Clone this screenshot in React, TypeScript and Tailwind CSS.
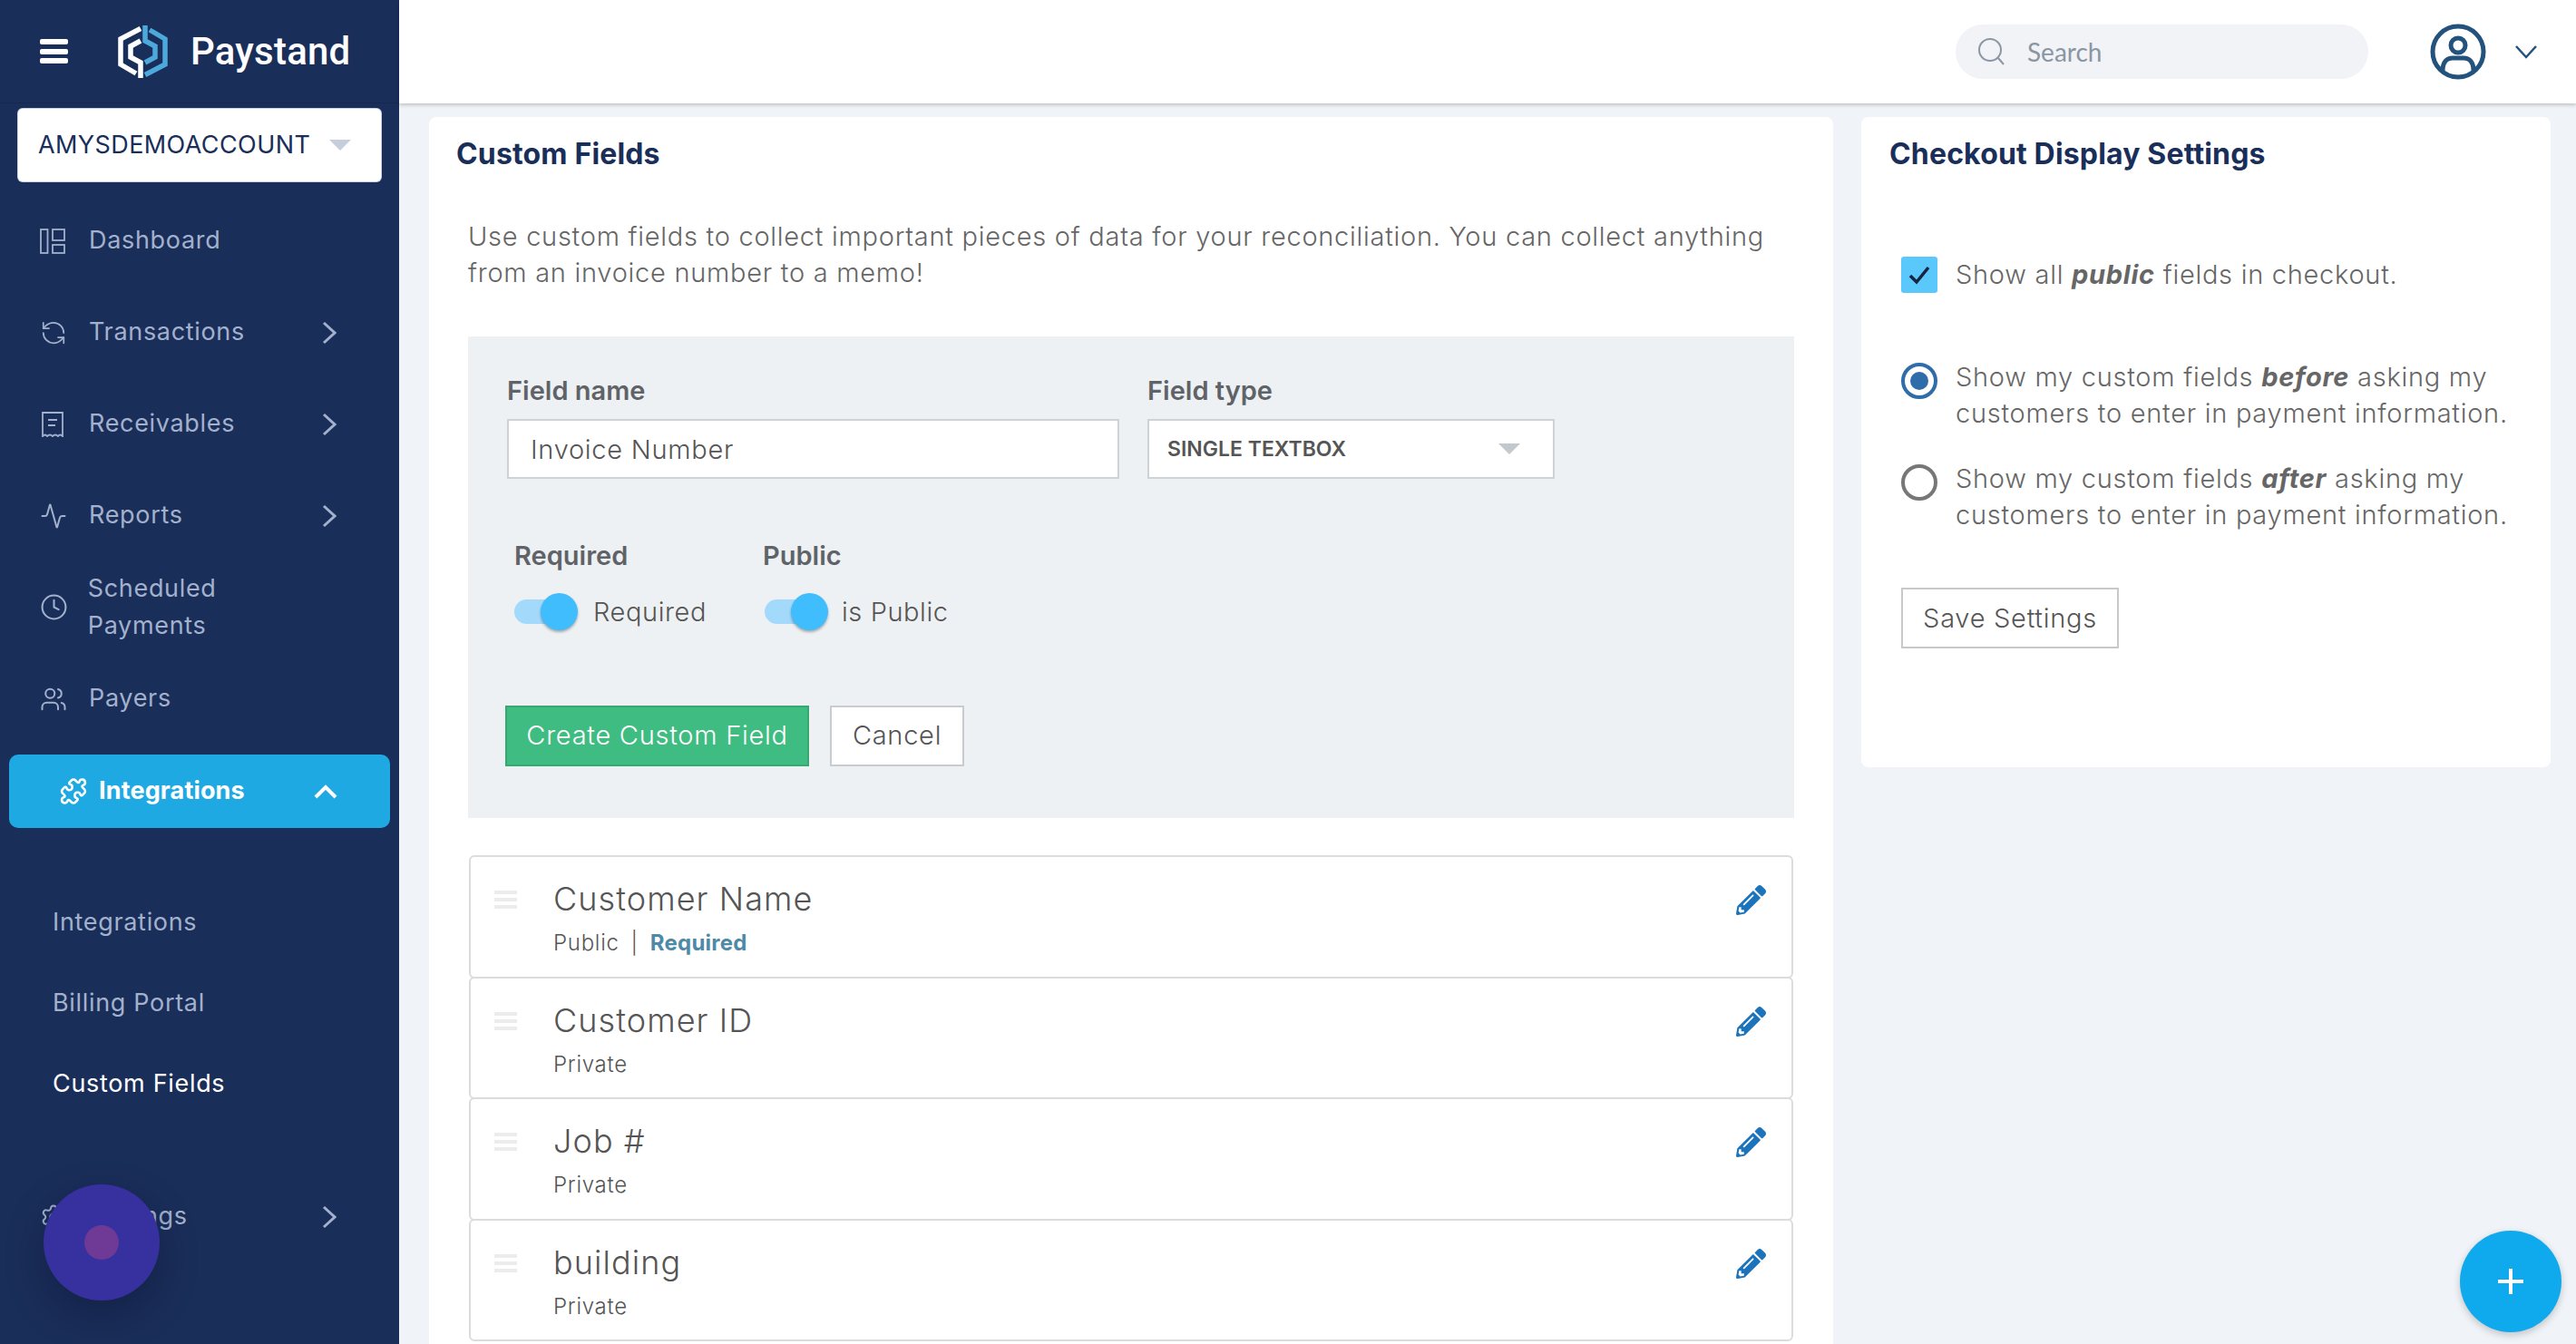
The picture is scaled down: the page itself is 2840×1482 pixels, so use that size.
import React from "react";
import { Activity, Clock, Users, Puzzle, Settings, RefreshCcw } from "lucide-react";
import { FaPencilAlt } from "react-icons/fa";

const Chevron = () => (
  <svg width="16" height="26" viewBox="0 0 16 26" fill="none" stroke="#a3b1cd" strokeWidth="3">
    <polyline points="2,2 14,13 2,24" />
  </svg>
);

const DashIcon = () => (
  <svg width="28" height="28" viewBox="0 0 28 28" fill="none" stroke="#a3b1cd" strokeWidth="1.8">
    <rect x="1" y="1" width="7.5" height="26" />
    <rect x="14" y="1" width="13" height="12" />
    <rect x="14" y="18" width="13" height="9" />
  </svg>
);

const ReceiptIcon = () => (
  <svg width="28" height="28" viewBox="0 0 28 28" fill="none" stroke="#a3b1cd" strokeWidth="1.8">
    <path d="M3 1H25V27C23 25 21.5 25 20 27C18 25 16 25 14 27C12 25 10 25 8 27C6.5 25 5 25 3 27Z" />
    <path d="M9 9H19M9 15H17" />
  </svg>
);

const NavRow = ({ icon, label, chevron }: { icon: React.ReactNode; label: string; chevron?: boolean }) => (
  <div className="flex h-[101px] items-center justify-between pl-[44px] pr-[69px]">
    <div className="flex items-center">
      <span className="flex w-[54px] items-center">{icon}</span>
      <span className="text-[27px] tracking-[0.025em] text-[#a3b1cd]">{label}</span>
    </div>
    {chevron && <Chevron />}
  </div>
);

const Toggle = () => (
  <div className="relative h-[41px] w-[70px]">
    <div className="absolute left-0 top-[7px] h-[27px] w-[60px] rounded-full bg-[#a3d9fb]" />
    <div className="absolute right-0 top-0 h-[41px] w-[41px] rounded-full bg-[#40bdfd] shadow-[0_2px_3px_rgba(0,0,0,0.3)]" />
  </div>
);

const FieldItem = ({ name, pub, required }: { name: string; pub: string; required?: boolean }) => (
  <div className="-mt-[2px] flex h-[135.5px] items-start rounded-[6px] border-2 border-[#dcdcdc] bg-white pl-[26px] pr-[28px] first:mt-0">
    <div className="mt-[37px] flex w-[65px] flex-col gap-[4px]">
      <div className="h-[4px] w-[25px] bg-[#ececec]" />
      <div className="h-[4px] w-[25px] bg-[#ececec]" />
      <div className="h-[4px] w-[25px] bg-[#ececec]" />
    </div>
    <div className="flex-1">
      <div className="mt-[22px] h-[48px] text-[36px] font-light leading-[48px] tracking-[0.03em] text-[#555]">{name}</div>
      <div className="mt-[9px] flex h-[32px] items-center text-[24px] font-light tracking-[0.03em] text-[#555]">
        <span>{pub}</span>
        {required && (
          <>
            <span className="mx-[13px]">|</span>
            <span className="font-bold tracking-[0.01em] text-[#4e8aa8]">Required</span>
          </>
        )}
      </div>
    </div>
    <FaPencilAlt className="mt-[31px] text-[#1a73bb]" size={33} />
  </div>
);

export default function App() {
  return (
    <div className="relative flex h-[1482px] w-[2840px] overflow-hidden bg-[#f0f3f7] font-['Inter',sans-serif]">
      {/* Sidebar */}
      <aside className="flex h-full w-[440px] shrink-0 flex-col bg-[#1a2e5a]">
        <div className="flex h-[114px] shrink-0 items-center border-b border-[#16284f] pl-[44px]">
          <div className="flex w-[31px] flex-col gap-[4.5px]">
            <div className="h-[6px] rounded-[2px] bg-white" />
            <div className="h-[6px] rounded-[2px] bg-white" />
            <div className="h-[6px] rounded-[2px] bg-white" />
          </div>
          <svg className="ml-[55px]" width="55" height="58" viewBox="0 0 55 58" fill="none" strokeWidth="5.5">
            <path d="M25 3.5L3 15V43L20 53" stroke="#fff" />
            <path d="M25 17L14 23V35L25 41V58" stroke="#fff" />
            <path d="M30 54.5L52 43V15L35 5" stroke="#4da9dc" />
            <path d="M30 41L41 35V23L30 17V0" stroke="#4da9dc" />
          </svg>
          <span className="ml-[25px] font-['Roboto',sans-serif] text-[42px] font-medium tracking-[0.005em] text-white">Paystand</span>
        </div>
        <div className="mx-[20px] mt-[6px] flex h-[80px] shrink-0 items-center justify-between rounded-[5px] bg-white pl-[22px] pr-[33px] shadow-[0_0_0_1px_#c9d3df]">
          <span className="text-[27px] tracking-[0.015em] text-[#1a2e5a]">AMYSDEMOACCOUNT</span>
          <div className="h-0 w-0 border-x-[12px] border-t-[12px] border-x-transparent border-t-[#c5cfdb]" />
        </div>
        <div className="mt-[15px] flex flex-col">
          <NavRow icon={<DashIcon />} label="Dashboard" />
          <NavRow icon={<RefreshCcw size={30} strokeWidth={1.4} color="#a3b1cd" />} label="Transactions" chevron />
          <NavRow icon={<ReceiptIcon />} label="Receivables" chevron />
          <NavRow icon={<Activity size={30} strokeWidth={1.6} color="#a3b1cd" />} label="Reports" chevron />
          <NavRow icon={<Clock size={31} strokeWidth={1.6} color="#a3b1cd" />} label="Scheduled Payments" />
          <NavRow icon={<Users size={30} strokeWidth={1.6} color="#a3b1cd" />} label="Payers" />
          <div className="mx-[10px] mt-[11px] flex h-[81px] items-center justify-between rounded-[10px] bg-[#1ea9e3] pl-[43px] pr-[58px]">
            <div className="flex items-center">
              <Puzzle size={31} strokeWidth={2} color="#fff" className="w-[56px]" />
              <span className="text-[27px] font-bold tracking-[0.005em] text-white">Integrations</span>
            </div>
            <svg width="26" height="16" viewBox="0 0 26 16" fill="none" stroke="#fff" strokeWidth="4">
              <polyline points="2,14 13,3 24,14" />
            </svg>
          </div>
          <div className="mt-[60px] flex flex-col pl-[58px] text-[27px] tracking-[0.025em] text-[#a3b1cd]">
            <div className="flex h-[89px] items-center">Integrations</div>
            <div className="flex h-[89px] items-center">Billing Portal</div>
            <div className="flex h-[89px] items-center text-white">Custom Fields</div>
          </div>
          <div className="mt-[51px]">
            <NavRow icon={<Settings size={30} strokeWidth={1.6} color="#a3b1cd" />} label="Settings" chevron />
          </div>
        </div>
      </aside>

      {/* Main */}
      <div className="flex h-full min-w-0 flex-1 flex-col">
        <header className="z-10 flex h-[114px] shrink-0 items-center justify-end bg-white pr-[42px] shadow-[0_2px_4px_rgba(0,0,0,0.2)]">
          <div className="flex h-[60px] w-[455px] items-center rounded-full bg-[#f1f3f6] pl-[24px]">
            <svg width="31" height="30" viewBox="0 0 31 30" fill="none" stroke="#8a96a3" strokeWidth="2">
              <circle cx="14" cy="13" r="12" />
              <path d="M23 22L29 29" />
            </svg>
            <span className="ml-[24px] font-['Lato',sans-serif] text-[28px] text-[#8a96a3]">Search</span>
          </div>
          <svg className="ml-[68px]" width="62" height="62" viewBox="0 0 62 62" fill="none" stroke="#23527c" strokeWidth="5">
            <circle cx="31" cy="31" r="28" />
            <circle cx="31" cy="24" r="8" />
            <path d="M14 52C14 42 19 38 25 38H37C43 38 48 42 48 52" />
          </svg>
          <svg className="ml-[31px]" width="26" height="16" viewBox="0 0 26 16" fill="none" stroke="#23527c" strokeWidth="2.5">
            <polyline points="2,2 13,14 24,2" />
          </svg>
        </header>

        <main className="flex min-h-0 flex-1 items-start gap-[31px] pl-[33px] pr-[28px] pt-[15px]">
          {/* Custom fields card */}
          <section className="h-[1400px] w-[1548px] shrink-0 rounded-t-[8px] bg-white">
            <h2 className="pl-[30px] pt-[20px] text-[32px] font-bold leading-[42px] tracking-[0.005em] text-[#1a2e5a]">Custom Fields</h2>
            <p className="mx-[43px] mt-[50px] text-[29px] font-light leading-[40px] tracking-[0.025em] text-[#666]">
              Use custom fields to collect important pieces of data for your reconciliation. You can collect anything
              <br />
              from an invoice number to a memo!
            </p>
            <div className="mx-[43px] mt-[50px] h-[531px] bg-[#edf1f4] pl-[43px] pt-[40px]">
              <div className="flex gap-[31px]">
                <div className="flex w-[675px] flex-col">
                  <label className="h-[40px] text-[29px] font-semibold leading-[40px] text-[#5f6368]">Field name</label>
                  <input
                    readOnly
                    value="Invoice Number"
                    className="mt-[11px] h-[66px] border-2 border-[#cdd2d6] bg-white px-[24px] text-[29px] font-light tracking-[0.025em] text-[#555] outline-none"
                  />
                </div>
                <div className="flex w-[449px] flex-col">
                  <label className="h-[40px] text-[29px] font-semibold leading-[40px] text-[#5f6368]">Field type</label>
                  <div className="mt-[11px] flex h-[66px] items-center justify-between border-2 border-[#cdd2d6] bg-white pl-[20px] pr-[36px]">
                    <span className="text-[23px] font-semibold text-[#555]">SINGLE TEXTBOX</span>
                    <div className="h-0 w-0 border-x-[12px] border-t-[12px] border-x-transparent border-t-[#c3c8cd]" />
                  </div>
                </div>
              </div>
              <div className="ml-[8px] mt-[65px] flex">
                <div className="w-[274px]">
                  <div className="h-[40px] text-[29px] font-semibold leading-[40px] text-[#5f6368]">Required</div>
                  <div className="mt-[20px] flex items-center gap-[17px]">
                    <Toggle />
                    <span className="text-[29px] font-light tracking-[0.02em] text-[#555]">Required</span>
                  </div>
                </div>
                <div>
                  <div className="h-[40px] text-[29px] font-semibold leading-[40px] text-[#5f6368]">Public</div>
                  <div className="ml-[2px] mt-[20px] flex items-center gap-[15px]">
                    <Toggle />
                    <span className="text-[29px] font-light tracking-[0.02em] text-[#555]">is Public</span>
                  </div>
                </div>
              </div>
              <div className="-ml-[2px] mt-[81px] flex gap-[23px]">
                <button className="h-[67px] w-[335px] border-2 border-[#38a873] bg-[#3fbc81] text-[29px] font-light tracking-[0.025em] text-white">
                  Create Custom Field
                </button>
                <button className="h-[67px] w-[148px] border-2 border-[#c8ccd0] bg-white text-[29px] font-light tracking-[0.025em] text-[#555]">
                  Cancel
                </button>
              </div>
            </div>
            <div className="mx-[44px] mt-[41px] flex flex-col">
              <FieldItem name="Customer Name" pub="Public" required />
              <FieldItem name="Customer ID" pub="Private" />
              <FieldItem name="Job #" pub="Private" />
              <FieldItem name="building" pub="Private" />
            </div>
          </section>

          {/* Checkout settings */}
          <section className="h-[717px] w-[760px] shrink-0 rounded-[8px] bg-white">
            <h2 className="pl-[31px] pt-[20px] text-[32px] font-bold leading-[42px] tracking-[0.005em] text-[#1a2e5a]">Checkout Display Settings</h2>
            <div className="mt-[92px] flex pl-[44px]">
              <div className="flex h-[40px] w-[40px] shrink-0 items-center justify-center rounded-[3px] bg-[#5ac8fa]">
                <svg width="24" height="22" viewBox="0 0 24 22" fill="none" stroke="#162440" strokeWidth="3.5">
                  <polyline points="2,12 9,19 22,3" />
                </svg>
              </div>
              <p className="ml-[20px] text-[29px] font-light leading-[40px] tracking-[0.025em] text-[#666]">
                Show all <b className="font-bold italic">public</b> fields in checkout.
              </p>
            </div>
            <div className="mt-[73px] flex pl-[44px]">
              <div className="mt-[4px] flex h-[40px] w-[40px] shrink-0 items-center justify-center rounded-full border-[4px] border-[#2e6da9]">
                <div className="h-[20px] w-[20px] rounded-full bg-[#2e6da9]" />
              </div>
              <p className="ml-[20px] w-[620px] text-[29px] font-light leading-[40px] tracking-[0.025em] text-[#666]">
                Show my custom fields <b className="font-bold italic">before</b> asking my customers to enter in payment information.
              </p>
            </div>
            <div className="mt-[32px] flex pl-[44px]">
              <div className="mt-[4px] h-[40px] w-[40px] shrink-0 rounded-full border-[4px] border-[#777]" />
              <p className="ml-[20px] w-[620px] text-[29px] font-light leading-[40px] tracking-[0.025em] text-[#666]">
                Show my custom fields <b className="font-bold italic">after</b> asking my customers to enter in payment information.
              </p>
            </div>
            <button className="ml-[44px] mt-[60px] h-[67px] w-[240px] border-2 border-[#c8c8c8] bg-white text-[29px] font-light tracking-[0.025em] text-[#555]">
              Save Settings
            </button>
          </section>
        </main>
      </div>

      {/* Floating chat bubble */}
      <div className="absolute left-[48px] top-[1306px] flex h-[128px] w-[128px] items-center justify-center rounded-full bg-[#37309f] shadow-[0_16px_40px_rgba(10,15,40,0.35)]">
        <div className="h-[38px] w-[38px] rounded-full bg-[#6e3a96]" />
      </div>
      {/* FAB */}
      <div className="absolute left-[2712px] top-[1357px] flex h-[112px] w-[112px] items-center justify-center rounded-full bg-[#0fa9ee] shadow-[0_3px_8px_rgba(0,0,0,0.2)]">
        <svg width="28" height="28" viewBox="0 0 28 28" stroke="#fff" strokeWidth="4">
          <path d="M14 0V28M0 14H28" />
        </svg>
      </div>
    </div>
  );
}
